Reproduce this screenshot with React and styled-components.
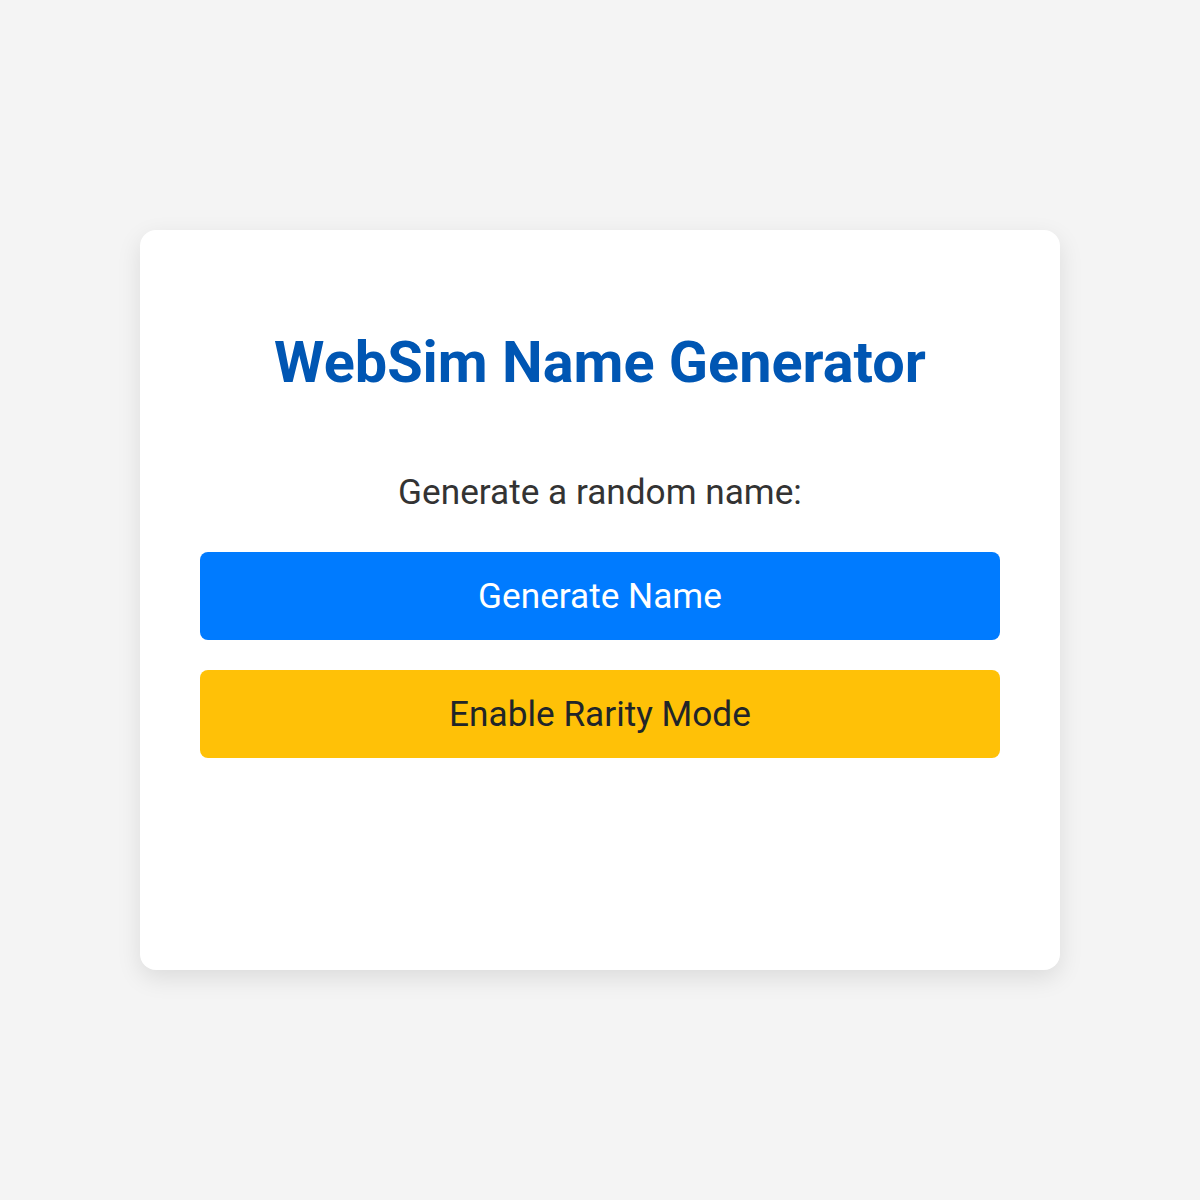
import React from 'react';
import styled, { createGlobalStyle } from 'styled-components';

const GlobalStyle = createGlobalStyle`
  html, body {
    margin: 0;
    padding: 0;
    background-color: #f4f4f4;
    font-family: Roboto, "Liberation Sans", Arial, sans-serif;
  }
`;

const Page = styled.div`
  min-height: 1200px;
  display: flex;
  align-items: center;
  justify-content: center;
`;

const Card = styled.div`
  width: 920px;
  height: 740px;
  box-sizing: border-box;
  padding: 60px;
  background-color: #ffffff;
  border-radius: 16px;
  box-shadow: 0 8px 24px rgba(0, 0, 0, 0.1);
  text-align: center;
`;

const Title = styled.h1`
  margin: 40px 0 0;
  font-size: 57.6px;
  line-height: 66px;
  font-weight: 700;
  color: #0056b3;
`;

const Prompt = styled.p`
  margin: 76px 0 0;
  font-size: 35.2px;
  line-height: 40px;
  color: #333333;
`;

const ButtonStack = styled.div`
  display: flex;
  flex-direction: column;
  gap: 30px;
  margin-top: 40px;
`;

const Button = styled.button`
  height: 88px;
  width: 100%;
  border: none;
  border-radius: 8px;
  font-family: inherit;
  font-size: 35.2px;
  cursor: pointer;
  background-color: ${(p) => (p.$variant === 'rarity' ? '#ffc107' : '#007bff')};
  color: ${(p) => (p.$variant === 'rarity' ? '#212529' : '#ffffff')};
`;

export default function App() {
  return (
    <>
      <GlobalStyle />
      <Page>
        <Card>
          <Title>WebSim Name Generator</Title>
          <Prompt>Generate a random name:</Prompt>
          <ButtonStack>
            <Button>Generate Name</Button>
            <Button $variant="rarity">Enable Rarity Mode</Button>
          </ButtonStack>
        </Card>
      </Page>
    </>
  );
}
